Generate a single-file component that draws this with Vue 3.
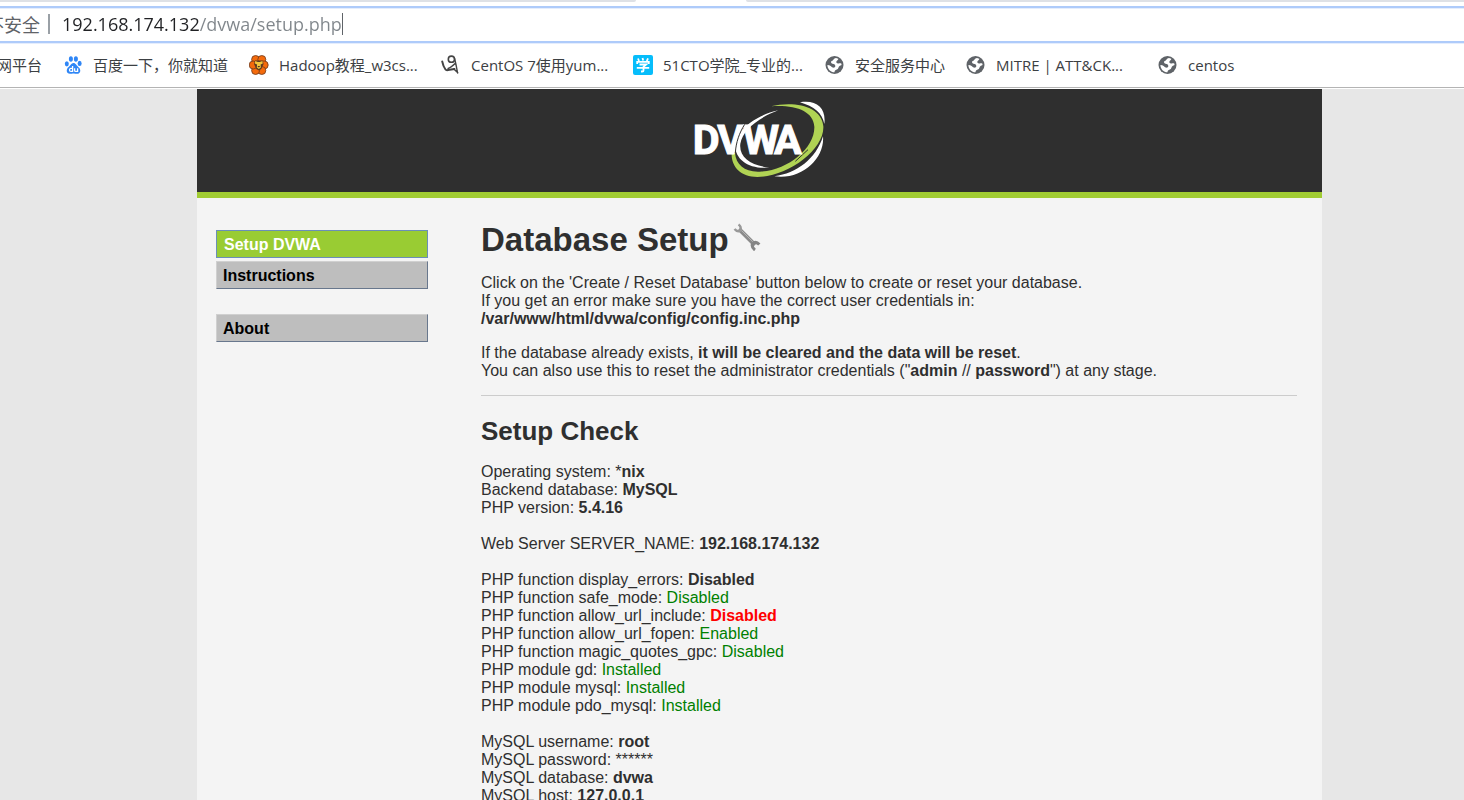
<script setup>
import { ref } from 'vue'

const address = ref('192.168.174.132/dvwa/setup.php')

const bookmarks = [
  { icon: 'paw', label: '百度一下，你就知道' },
  { icon: 'flower', label: 'Hadoop教程_w3cs...', wide: true },
  { icon: 'figure', label: 'CentOS 7使用yum...', wide: true },
  { icon: 'xue', label: '51CTO学院_专业的...', wide: true },
  { icon: 'globe', label: '安全服务中心' },
  { icon: 'globe', label: 'MITRE | ATT&CK...', wide: true },
  { icon: 'globe', label: 'centos' },
]

const menu = [
  [
    { label: 'Setup DVWA', active: true },
    { label: 'Instructions' },
  ],
  [{ label: 'About' }],
]

const checks = [
  [
    { name: 'Operating system: *', value: 'nix', kind: 'strong', tight: true },
    { name: 'Backend database:', value: 'MySQL', kind: 'strong' },
    { name: 'PHP version:', value: '5.4.16', kind: 'strong' },
  ],
  [{ name: 'Web Server SERVER_NAME:', value: '192.168.174.132', kind: 'strong' }],
  [
    { name: 'PHP function display_errors:', value: 'Disabled', kind: 'strong' },
    { name: 'PHP function safe_mode:', value: 'Disabled', kind: 'success' },
    { name: 'PHP function allow_url_include:', value: 'Disabled', kind: 'failure' },
    { name: 'PHP function allow_url_fopen:', value: 'Enabled', kind: 'success' },
    { name: 'PHP function magic_quotes_gpc:', value: 'Disabled', kind: 'success' },
    { name: 'PHP module gd:', value: 'Installed', kind: 'success' },
    { name: 'PHP module mysql:', value: 'Installed', kind: 'success' },
    { name: 'PHP module pdo_mysql:', value: 'Installed', kind: 'success' },
  ],
  [
    { name: 'MySQL username:', value: 'root', kind: 'strong' },
    { name: 'MySQL password:', value: '******', kind: 'plain' },
    { name: 'MySQL database:', value: 'dvwa', kind: 'strong' },
    { name: 'MySQL host:', value: '127.0.0.1', kind: 'strong' },
  ],
]
</script>

<template>
  <div class="window">
    <div class="tabs">
      <span class="tab-left"></span>
      <span class="tab-right"></span>
    </div>

    <div class="omnibox">
      <label class="security" for="address">不安全</label>
      <span class="divider"></span>
      <input id="address" v-model="address" class="address" type="text" spellcheck="false" />
      <span class="caret"></span>
    </div>

    <nav class="bookmarks">
      <a class="bookmark first" href="#">网平台</a>
      <a v-for="b in bookmarks" :key="b.label" class="bookmark" :class="{ wide: b.wide }" href="#">
        <svg v-if="b.icon === 'paw'" class="icon" viewBox="0 0 20 20">
          <g fill="#2f86f6">
            <ellipse cx="3.8" cy="8.8" rx="2" ry="2.6" />
            <ellipse cx="7.9" cy="4" rx="2" ry="2.8" />
            <ellipse cx="12.9" cy="4" rx="2" ry="2.8" />
            <ellipse cx="16.6" cy="8.4" rx="2" ry="2.6" />
            <path d="M10.4 8C8.2 8 7.5 10.4 5.6 12C2.8 14 3.1 18.8 7 18.8C8.6 18.8 9.3 18.5 10.4 18.5S12.4 18.8 14 18.8C18 18.8 18.2 14.2 15.5 12.2C13.6 10.6 12.8 8 10.4 8Z" />
          </g>
          <path d="M9.6 11V16.4H7.8Q6.5 16.4 6.5 14.9T7.8 13.3H9.6M11.6 13.2V15.5Q11.6 16.4 12.6 16.4H14.6V13.2" fill="none" stroke="#fff" stroke-width="1.3" />
        </svg>
        <svg v-else-if="b.icon === 'flower'" class="icon" viewBox="0 0 20 20">
          <g fill="#f46a0b" stroke="#6b3a20" stroke-width="0.8">
            <circle cx="6.6" cy="4.5" r="4" />
            <circle cx="12.8" cy="4.5" r="4" />
            <circle cx="15.2" cy="10" r="4" />
            <circle cx="12.8" cy="15.5" r="4" />
            <circle cx="6.6" cy="15.5" r="4" />
            <circle cx="4.2" cy="10" r="4" />
          </g>
          <path d="M6 5.5H13.6L14.6 9L12.3 14L9.8 15.5L7.3 14L5 9Z" fill="#5c3b22" />
          <path d="M6.2 6L8.8 7H10.8L13.4 6L13.8 8.5L11.6 9.5L11.9 12.5L9.8 14L7.8 12.5L8.1 9.5L5.8 8.5Z" fill="#f3c53b" />
          <path d="M8.3 11H11.3L9.8 12.5Z" fill="#4b3020" />
        </svg>
        <svg v-else-if="b.icon === 'figure'" class="icon" viewBox="0 0 20 20">
          <g fill="none" stroke="#444" stroke-linecap="round">
            <circle cx="10.4" cy="4.2" r="3.1" stroke-width="1.6" />
            <path d="M1.2 6.4Q2.2 11.5 4.5 14.5Q5.2 15.5 7 15.1L13.5 14" stroke-width="2" />
            <path d="M13.6 3.5Q15.2 10 16.6 18M14.1 8.5Q9.6 12.8 7.1 13.5M12.8 14L16.8 17.8" stroke-width="1.4" />
          </g>
        </svg>
        <svg v-else-if="b.icon === 'xue'" class="icon" viewBox="0 0 20 20">
          <rect width="20" height="20" rx="2" fill="#06bdfb" />
          <path d="M5 3.5L6 6M9.5 3L10.2 5.5M15 3.3L13.8 6M4.2 9V6.8H15.8V9M6.5 9.5H13.2L10.5 11.8V15.5Q10.5 16.5 9.3 16.5H8M3.8 12.8H16.2" fill="none" stroke="#fff" stroke-width="1.8" />
        </svg>
        <svg v-else class="icon" viewBox="0 0 20 20">
          <circle cx="9.5" cy="10" r="9" fill="#5f6368" />
          <path d="M11 2.9C8.4 3.2 8.6 5.4 6.7 6.1C5.5 6.6 5.9 8.5 7.5 8.7C9.3 8.9 9.8 9.2 10.2 10.5C10.8 12 9.2 13 7.7 12.5C6.2 12 5.7 10.5 4.2 10.2L2.4 9.9C2.4 14 5.6 17.2 9.5 17.2C9.6 15.6 10.2 15 11.8 14.5C13.6 13.9 13.2 11.7 14.6 10.9C15.4 10.3 16.2 11 16.6 9.3C16.4 8 15.1 8.3 13.5 8.5C11.7 8.7 10.7 7.3 11.7 6.1C12.4 5.3 13.3 4.8 13.3 3.7Z" fill="#fff" />
        </svg>
        <span>{{ b.label }}</span>
      </a>
    </nav>

    <div class="page">
      <div class="container">
        <header class="header">
          <svg class="logo" viewBox="42 34 396 228" role="img" aria-label="DVWA">
            <path d="M295 62C238 83 188 120 181 162C176 203 213 228 268 234C207 239 165 209 166 168C169 119 230 76 295 62Z" fill="#fff" />
            <path d="M272 50C345 33 425 50 430 110C434 179 323 262 232 262C182 262 153 231 155 190H165C168 225 194 248 239 246C322 243 405 175 403 111C400 64 347 45 272 50Z" fill="#b0d354" />
            <path d="M346 215L384 180" stroke="#2f2f2f" stroke-width="3" />
            <path d="M360 38C410 30 439 55 433 103C427 70 402 50 360 38Z" fill="#fff" />
            <path d="M429 140C435 205 367 272 283 260C350 251 408 208 429 140Z" fill="#fff" />
            <text class="logo-text" x="38 112 189 282" y="192">DVWA</text>
            <path d="M194 104C178 130 168 157 166 190" fill="none" stroke="#2f2f2f" stroke-width="3" />
          </svg>
        </header>

        <div class="columns">
          <nav class="sidebar">
            <ul v-for="(group, i) in menu" :key="i" class="menu">
              <li v-for="m in group" :key="m.label">
                <a class="menu-link" :class="{ active: m.active }" href="#">{{ m.label }}</a>
              </li>
            </ul>
          </nav>

          <main class="content">
            <h1>
              Database Setup
              <svg class="wrench" viewBox="0 0 28 28">
                <path d="M6 6L22 22" stroke="#8b8b8b" stroke-width="4" />
                <path d="M6.5 5.5L22.5 21.5" stroke="#b5b5b5" stroke-width="1" />
                <path d="M5.5 1.5Q8.5 3.5 7.5 7.5Q4.5 9.5 1.5 6" fill="none" stroke="#999" stroke-width="2.4" />
                <path d="M26.3 21.5Q23 17.7 19.5 20.5Q18.2 24.5 22 27" fill="none" stroke="#858585" stroke-width="3" />
              </svg>
            </h1>
            <p>
              Click on the 'Create / Reset Database' button below to create or reset your database.<br />
              If you get an error make sure you have the correct user credentials in:<br />
              <strong>/var/www/html/dvwa/config/config.inc.php</strong>
            </p>
            <p>
              If the database already exists, <strong>it will be cleared and the data will be reset</strong>.<br />
              You can also use this to reset the administrator credentials ("<strong>admin</strong> //
              <strong>password</strong>") at any stage.
            </p>
            <hr />
            <h2>Setup Check</h2>
            <ul v-for="(group, i) in checks" :key="i" class="checks">
              <li v-for="c in group" :key="c.name">
                {{ c.name }}{{ c.tight ? '' : ' ' }}<span :class="c.kind">{{ c.value }}</span>
              </li>
            </ul>
          </main>
        </div>
      </div>
    </div>
  </div>
</template>

<style>
body {
  margin: 0;
}
</style>

<style scoped>
.window {
  display: flex;
  flex-direction: column;
  height: 100vh;
  overflow: hidden;
  background: #fff;
  font-family: "Open Sans", "Noto Sans CJK SC", sans-serif;
}

.tabs {
  display: flex;
  flex: none;
  gap: 110px;
  height: 2px;
}

.tab-left {
  width: 636px;
  background: #dee1e6;
  border-bottom-right-radius: 2px;
}

.tab-right {
  flex: 1;
  background: #dee1e6;
  border-bottom-left-radius: 2px;
}

.omnibox {
  display: flex;
  flex: none;
  align-items: center;
  box-sizing: border-box;
  height: 37px;
  margin: 4px 0 1px;
  padding-bottom: 1px;
  border-top: 2px solid #aecbfa;
  border-bottom: 2px solid #aecbfa;
  box-shadow: inset 0 1px #e4edfd, 0 1px #e4edfd;
}

.security {
  flex: none;
  display: flex;
  justify-content: flex-end;
  width: 40px;
  overflow: hidden;
  color: #5f6368;
  font-size: 18px;
  white-space: nowrap;
}

.divider {
  width: 2px;
  height: 20px;
  margin: 0 12px 0 8px;
  background: #9aa0a6;
}

.address {
  field-sizing: content;
  padding: 0;
  border: 0;
  outline: 0;
  background: linear-gradient(90deg, #202124 137px, #80868b 137px);
  background-clip: text;
  -webkit-text-fill-color: transparent;
  font-family: inherit;
  font-size: 18px;
}

.caret {
  width: 1px;
  height: 22px;
  background: #5f6368;
}

.bookmarks {
  display: flex;
  flex: none;
  align-items: center;
  box-sizing: border-box;
  height: 44px;
  padding-bottom: 2px;
  border-bottom: 1px solid #b4b4b4;
}

.bookmark {
  display: flex;
  flex: none;
  align-items: center;
  gap: 10px;
  box-sizing: border-box;
  padding-right: 21px;
  color: #3c4043;
  font-size: 15px;
  line-height: 20px;
  text-decoration: none;
  white-space: nowrap;
}

.first {
  justify-content: flex-end;
  width: 63px;
  overflow: hidden;
}

.wide {
  width: 192px;
}

.icon {
  flex: none;
  width: 20px;
  height: 20px;
}

.page {
  flex: 1;
  min-height: 0;
  margin-top: 1px;
  padding-left: 55px;
  overflow: hidden;
  background: #e7e7e7;
  color: #2f2f2f;
  font-family: "Liberation Sans", Arial, sans-serif;
  font-size: 16px;
  line-height: 18px;
}

.container {
  max-width: 1125px;
  margin: 0 auto;
  background: #f4f4f4;
}

.header {
  display: flex;
  justify-content: center;
  padding: 12px 0 15px;
  border-bottom: 6px solid #a1cc33;
  background: #2f2f2f;
}

.logo {
  width: 132px;
  height: 76px;
}

.logo-text {
  fill: #fff;
  stroke: #fff;
  stroke-width: 3px;
  font-family: Roboto, sans-serif;
  font-size: 124px;
  font-weight: 700;
}

.columns {
  display: flex;
  gap: 53px;
  padding: 0 25px 0 19px;
}

.sidebar {
  flex: none;
  width: 212px;
  padding-top: 32px;
}

.menu {
  display: grid;
  gap: 3px;
  margin: 0 0 25px;
  padding: 0;
  list-style: none;
}

.menu-link {
  display: block;
  padding: 5px 6px 3px;
  border: 1px solid;
  border-color: #d0d0d0 #68778d #68778d #d0d0d0;
  background: #bebebe;
  color: #000;
  font-weight: 700;
  text-decoration: none;
}

.active {
  padding-left: 7px;
  border-color: #6b8fb8;
  background: #9c3;
  color: #fff;
}

.content {
  flex: 1;
  padding-top: 20px;
}

h1 {
  display: flex;
  align-items: center;
  gap: 4px;
  margin: 0 0 12px;
  font-size: 33px;
  line-height: 44px;
}

.wrench {
  width: 28px;
  height: 28px;
  margin-bottom: 6px;
}

p {
  margin: 0 0 16px;
}

hr {
  height: 1px;
  margin: 15px 0 19px;
  border: 0;
  background: #ccc;
}

p + hr {
  margin-top: -1px;
}

h2 {
  margin: 0 0 16px;
  font-size: 26px;
  line-height: 32px;
}

.checks {
  margin: 0 0 18px;
  padding: 0;
  list-style: none;
}

.strong {
  font-weight: 700;
}

.success {
  color: #008000;
}

.failure {
  color: #f00;
  font-weight: 700;
}
</style>
